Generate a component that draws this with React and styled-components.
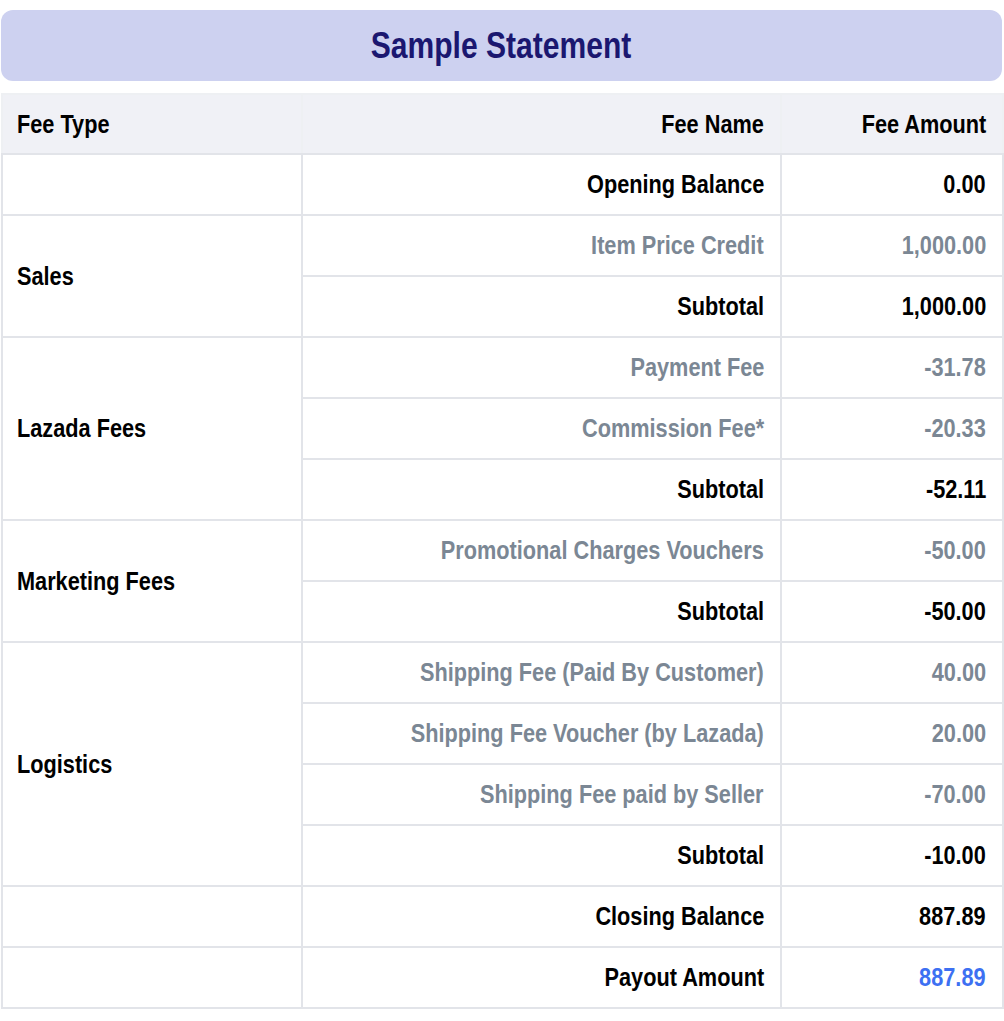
import React from "react";
import styled, { createGlobalStyle } from "styled-components";

const GlobalStyle = createGlobalStyle`
  body {
    margin: 0;
    background: #ffffff;
    font-family: "Liberation Sans Narrow", "Arial Narrow", "Liberation Sans", Arial, sans-serif;
  }
`;

const Page = styled.div`
  width: 1004px;
  padding: 10px 2px 0 1px;
  box-sizing: border-box;
  display: flex;
  flex-direction: column;
  gap: 12px;
`;

const Title = styled.h1`
  margin: 0;
  height: 71px;
  display: flex;
  align-items: center;
  justify-content: center;
  background-color: #cdd1f0;
  border-radius: 12px;
  color: #1b1770;
  font-size: 36px;
  font-weight: bold;
`;

// no condensed face is installed, so the narrow look is squeezed in
const Narrow = styled.span`
  display: inline-block;
  white-space: nowrap;
  transform: scaleX(0.835);
  transform-origin: ${(props) => props.origin || "right"} center;
`;

const Table = styled.table`
  width: 1001px;
  border-collapse: collapse;
  table-layout: fixed;
`;

const HeadCell = styled.th`
  height: 58px;
  padding: ${(props) => (props.left ? "0 16px 0 14px" : "0 16px")};
  background-color: #f0f1f6;
  border: 2px solid #eef0f3;
  border-bottom: 2px solid #e2e4e9;
  text-align: ${(props) => (props.left ? "left" : "right")};
  font-size: 26px;
  font-weight: bold;
  color: #000;
`;

const Cell = styled.td`
  height: 59px;
  padding: ${(props) => (props.left ? "0 16px 0 14px" : "0 16px")};
  border: 2px solid #e2e4e9;
  text-align: ${(props) => (props.left ? "left" : "right")};
  font-size: 26px;
  font-weight: bold;
  color: ${(props) =>
    props.tone === "muted" ? "#7b8794" : props.tone === "blue" ? "#3d70f2" : "#000"};
`;

const groups = [
  { type: "", rows: [["Opening Balance", "0.00"]] },
  {
    type: "Sales",
    rows: [["Item Price Credit", "1,000.00", "muted"], ["Subtotal", "1,000.00"]],
  },
  {
    type: "Lazada Fees",
    rows: [
      ["Payment Fee", "-31.78", "muted"],
      ["Commission Fee*", "-20.33", "muted"],
      ["Subtotal", "-52.11"],
    ],
  },
  {
    type: "Marketing Fees",
    rows: [["Promotional Charges Vouchers", "-50.00", "muted"], ["Subtotal", "-50.00"]],
  },
  {
    type: "Logistics",
    rows: [
      ["Shipping Fee (Paid By Customer)", "40.00", "muted"],
      ["Shipping Fee Voucher (by Lazada)", "20.00", "muted"],
      ["Shipping Fee paid by Seller", "-70.00", "muted"],
      ["Subtotal", "-10.00"],
    ],
  },
  { type: "", rows: [["Closing Balance", "887.89"]] },
  { type: "", rows: [["Payout Amount", "887.89", "amount-blue"]] },
];

const App = () => {
  return (
    <>
      <GlobalStyle />
      <Page>
        <Title>
          <Narrow origin="center">Sample Statement</Narrow>
        </Title>
        <Table>
          <colgroup>
            <col style={{ width: "300px" }} />
            <col style={{ width: "479px" }} />
            <col style={{ width: "222px" }} />
          </colgroup>
          <thead>
            <tr>
              <HeadCell left>
                <Narrow origin="left">Fee Type</Narrow>
              </HeadCell>
              <HeadCell>
                <Narrow>Fee Name</Narrow>
              </HeadCell>
              <HeadCell>
                <Narrow>Fee Amount</Narrow>
              </HeadCell>
            </tr>
          </thead>
          <tbody>
            {groups.map((group, gi) =>
              group.rows.map(([name, amount, tone], ri) => (
                <tr key={`${gi}-${ri}`}>
                  {ri === 0 && (
                    <Cell left rowSpan={group.rows.length}>
                      <Narrow origin="left">{group.type}</Narrow>
                    </Cell>
                  )}
                  <Cell tone={tone === "muted" ? "muted" : undefined}>
                    <Narrow>{name}</Narrow>
                  </Cell>
                  <Cell
                    tone={
                      tone === "muted" ? "muted" : tone === "amount-blue" ? "blue" : undefined
                    }
                  >
                    <Narrow>{amount}</Narrow>
                  </Cell>
                </tr>
              ))
            )}
          </tbody>
        </Table>
      </Page>
    </>
  );
};

export default App;
